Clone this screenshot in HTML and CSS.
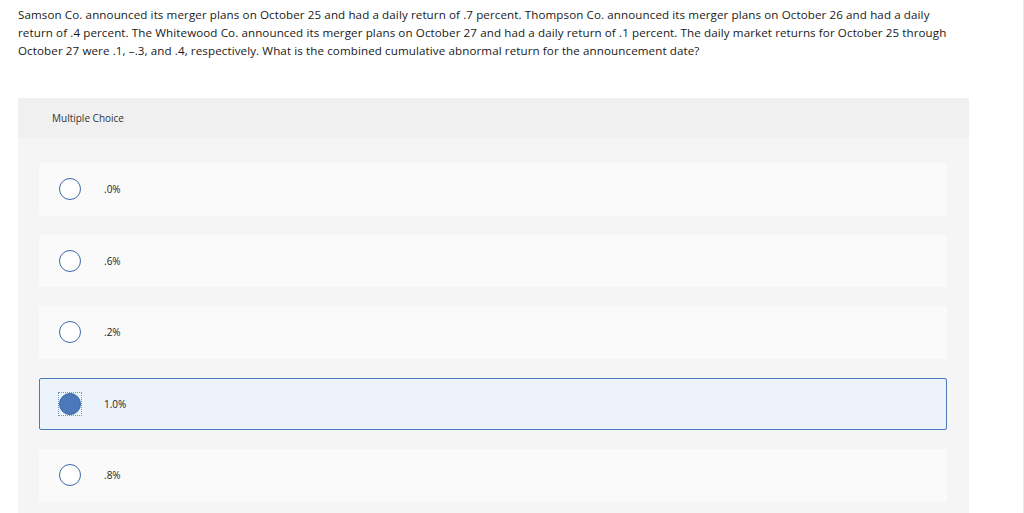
FILE: index.html
```html
<!DOCTYPE html>
<html>
<head>
<meta charset="utf-8">
<link rel="stylesheet" href="styles.css">
</head>
<body>
<div class="page">
  <p class="question">Samson Co. announced its merger plans on October 25 and had a daily return of .7 percent. Thompson Co. announced its merger plans on October 26 and had a daily return of .4 percent. The Whitewood Co. announced its merger plans on October 27 and had a daily return of .1 percent. The daily market returns for October 25 through October 27 were .1, &ndash;.3, and .4, respectively. What is the combined cumulative abnormal return for the announcement date?</p>
  <div class="panel">
    <div class="panel-head">Multiple Choice</div>
    <div class="panel-body">
      <div class="option"><span class="radio"></span><span class="label">.0%</span></div>
      <div class="option"><span class="radio"></span><span class="label">.6%</span></div>
      <div class="option"><span class="radio"></span><span class="label">.2%</span></div>
      <div class="option selected"><span class="focus"><span class="radio"></span></span><span class="label">1.0%</span></div>
      <div class="option"><span class="radio"></span><span class="label">.8%</span></div>
    </div>
  </div>
</div>
</body>
</html>
```

FILE: styles.css
```css
html, body {
  margin: 0;
  padding: 0;
  background: #ffffff;
  height: 100%;
  overflow: hidden;
}
body {
  font-family: "Open Sans", "Liberation Sans", sans-serif;
  color: #222222;
  border-right: 1px solid #e6e6e6;
  box-sizing: border-box;
}
.page {
  padding: 6px 0 0 18px;
  width: 951px;
}
.question {
  margin: 0;
  font-size: 11.6px;
  letter-spacing: 0.1px;
  line-height: 18px;
  width: 940px;
  color: #1a1a1a;
}
.panel {
  margin-top: 38px;
  width: 951px;
  background: #f5f5f5;
  border-radius: 2px;
}
.panel-head {
  height: 40px;
  background: #f0f0f0;
  font-size: 10px;
  line-height: 40px;
  padding-left: 34px;
  color: #333333;
  border-radius: 2px 2px 0 0;
}
.panel-body {
  padding: 25px 22px 20px 21px;
  display: flex;
  flex-direction: column;
  gap: 19px;
}
.option {
  height: 52.5px;
  background: #fafafa;
  border-radius: 2px;
  display: flex;
  align-items: center;
  padding-left: 20px;
  box-sizing: border-box;
}
.radio {
  width: 20px;
  height: 20px;
  border: 1px solid #3a6aa8;
  border-radius: 50%;
  background: #ffffff;
  flex: none;
}
.label {
  margin-left: 23px;
  font-size: 10px;
  color: #222222;
}
.option.selected {
  background: #ecf3fb;
  border: 1px solid #4a78b8;
  padding-left: 18px;
}
.focus {
  width: 22px;
  height: 22px;
  border: 1px dotted #6f93c6;
  display: flex;
  align-items: center;
  justify-content: center;
  flex: none;
}
.selected .radio {
  background: #4a78b8;
  border-color: #3a6aa8;
}
.selected .label {
  margin-left: 22px;
}
```
